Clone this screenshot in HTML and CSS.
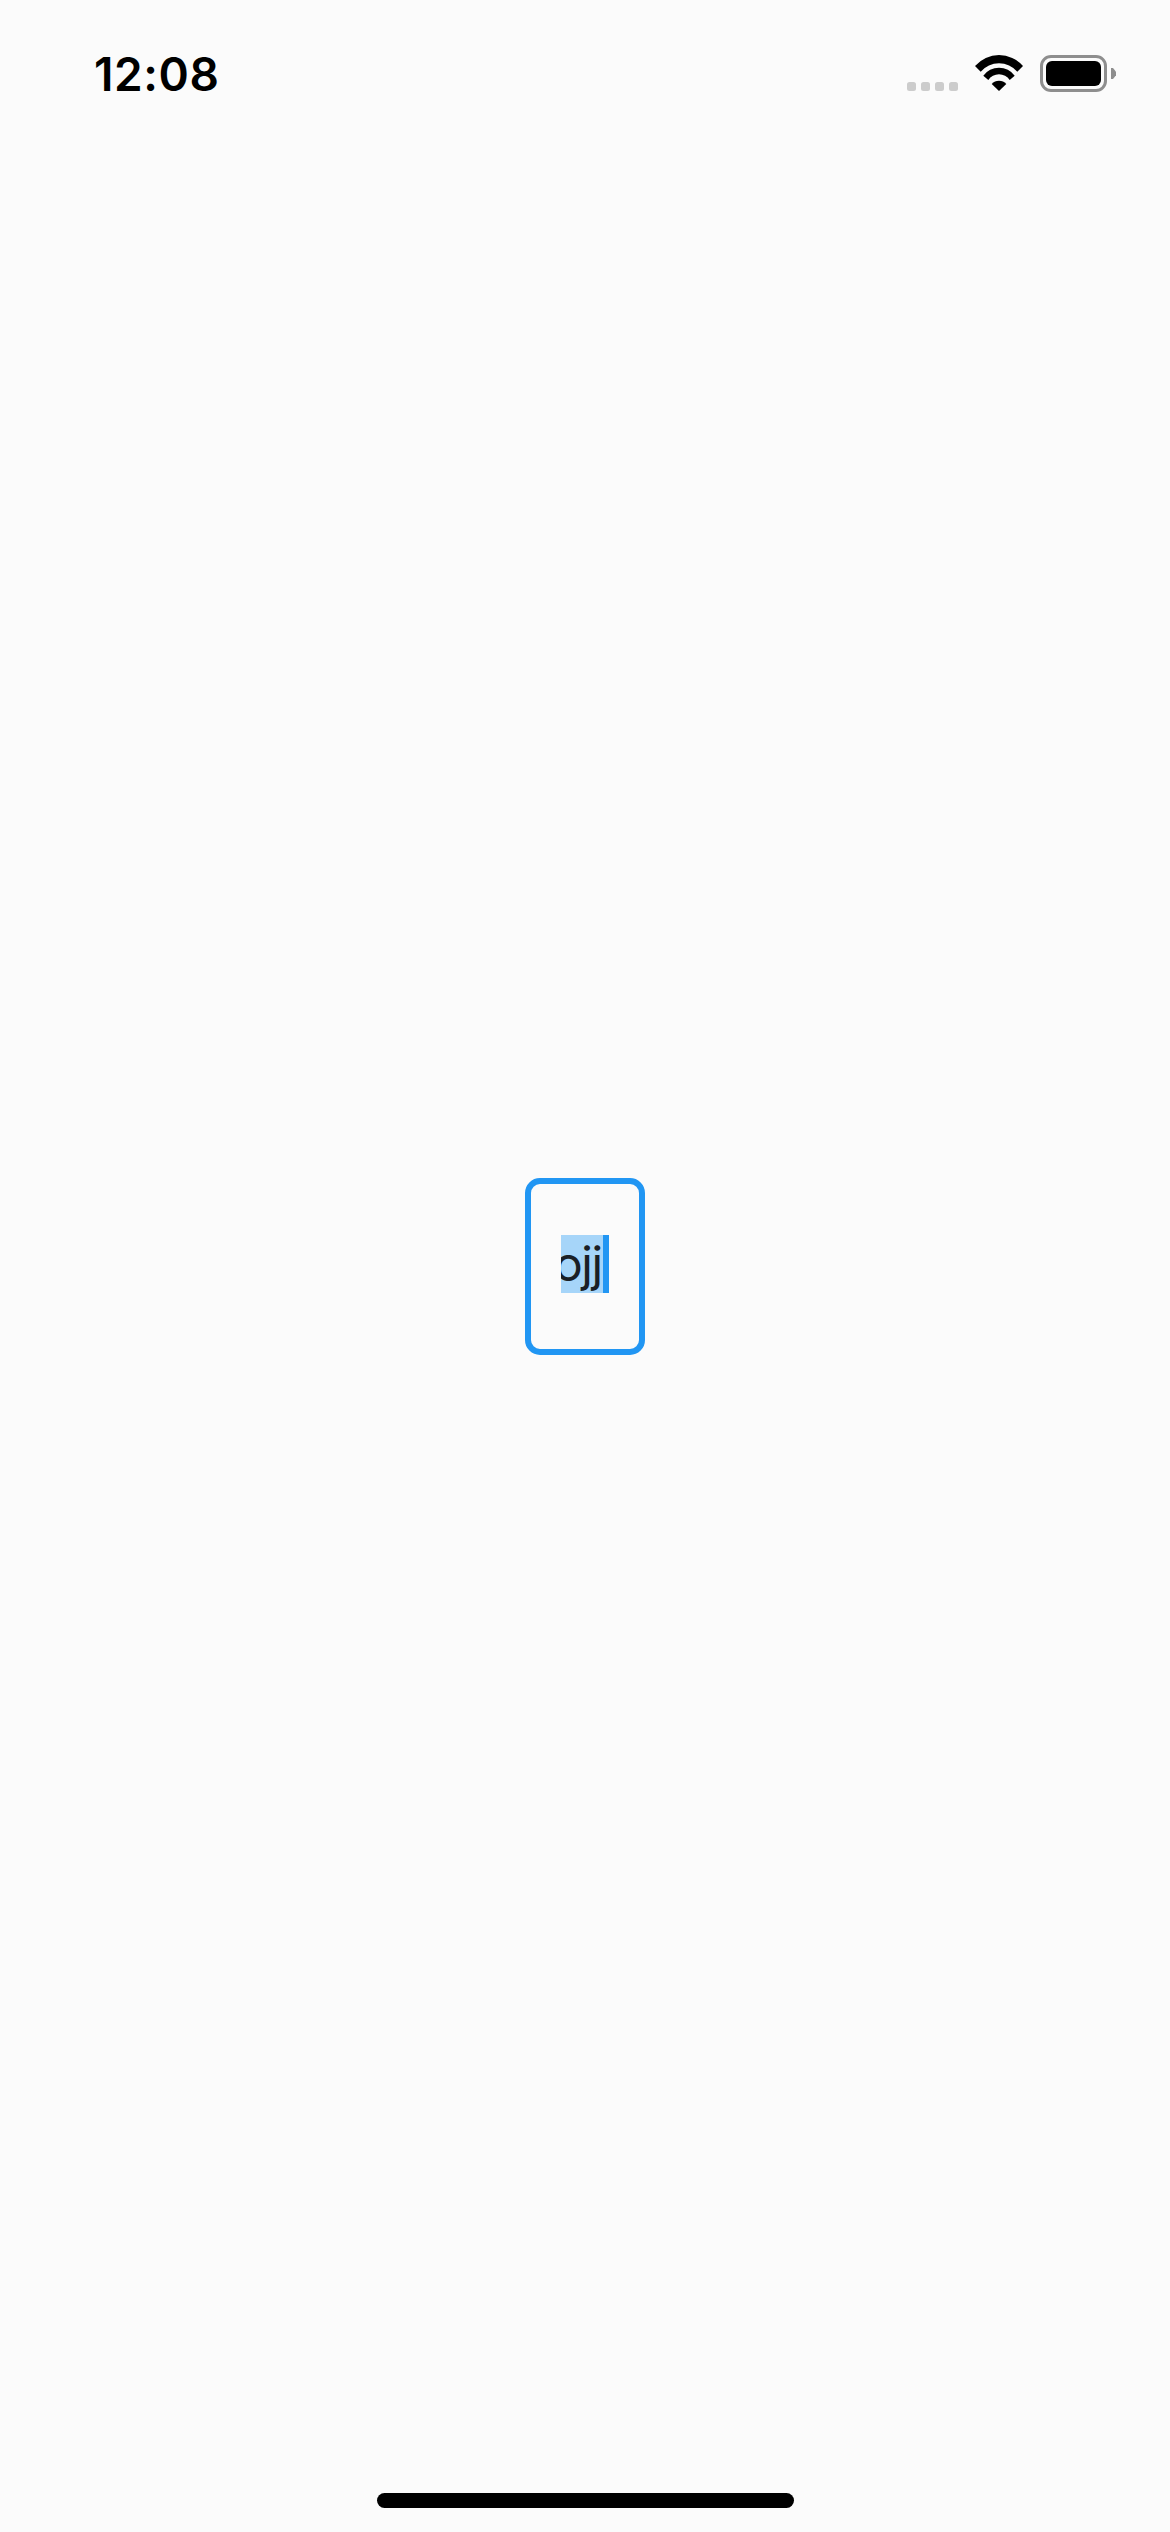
FILE: index.html
```html
<!DOCTYPE html>
<html lang="en">
<head>
<meta charset="utf-8">
<title>Text field</title>
<link rel="stylesheet" href="styles.css">
</head>
<body>
<div class="app">
  <header class="status-bar">
    <span class="time">12:08</span>
    <div class="status-icons">
      <div class="signal"><i></i><i></i><i></i><i></i></div>
      <svg class="wifi" viewBox="0 0 48 36" aria-hidden="true">
        <path d="M24 36 L16.7 29 A9.7 9.7 0 0 1 31.3 29 Z"/>
        <path d="M8.3 20.7 L13.3 25 A12.9 12.9 0 0 1 34.7 25 L39.7 20.7 A19.4 19.4 0 0 0 8.3 20.7 Z"/>
        <path d="M0 11 L5.7 16.7 A24.1 24.1 0 0 1 42.3 16.7 L48 11 A31.7 31.7 0 0 0 0 11 Z"/>
      </svg>
      <div class="battery">
        <div class="battery-body"><div class="battery-level"></div></div>
        <div class="battery-tip"></div>
      </div>
    </div>
  </header>
  <main class="content">
    <div class="field">
      <div class="selection"><span class="value">ojj</span><span class="cursor"></span></div>
    </div>
  </main>
  <footer class="home-area"><div class="home-bar"></div></footer>
</div>
</body>
</html>
```
FILE: styles.css
```css
* { box-sizing: border-box; }
html, body { margin: 0; padding: 0; }
body { background: #fbfbfb; font-family: "Inter", "Liberation Sans", sans-serif; }
.app { width: 1170px; height: 2532px; display: flex; flex-direction: column; }
.status-bar { height: 132px; display: flex; justify-content: space-between; align-items: flex-start; padding: 49px 54px 0 94px; }
.time { font-size: 46px; line-height: 50px; font-weight: 600; color: #000; letter-spacing: 0.6px; }
.status-icons { display: flex; align-items: flex-end; margin-top: 6px; }
.signal { display: flex; gap: 5px; margin-right: 17px; margin-bottom: 1px; }
.signal i { display: block; width: 9px; height: 9px; border-radius: 2.5px; background: #cccccc; }
.wifi { width: 48px; height: 36px; display: block; margin-right: 17px; margin-bottom: 1px; }
.wifi path { fill: #000; }
.battery { display: flex; align-items: center; }
.battery-body { width: 67px; height: 37px; border: 3px solid #8e8e8e; border-radius: 11px; padding: 3px; }
.battery-level { width: 100%; height: 100%; background: #000; border-radius: 6px; }
.battery-tip { width: 5px; height: 11px; margin-left: 4px; background: #8e8e8e; clip-path: polygon(0 0, 40% 0, 100% 35%, 100% 65%, 40% 100%, 0 100%); }
.content { flex: 1; display: flex; align-items: center; justify-content: center; }
.field { width: 120px; height: 177px; border: 6px solid #2196f3; border-radius: 15px; display: flex; align-items: center; justify-content: center; padding-bottom: 5px; }
.selection { width: 48px; height: 58px; background: #a6d5f9; display: flex; justify-content: flex-end; align-items: center; overflow: hidden; }
.value { font-family: "Inter", "Liberation Sans", sans-serif; font-size: 48px; line-height: 58px; color: #1a1f26; flex: none; letter-spacing: -1.5px; margin-right: 1.5px; }
.cursor { flex: none; width: 6px; height: 58px; background: #2196f3; }
.home-area { height: 132px; padding-top: 93px; display: flex; justify-content: center; }
.home-bar { width: 417px; height: 15px; border-radius: 8px; background: #000; }
```
